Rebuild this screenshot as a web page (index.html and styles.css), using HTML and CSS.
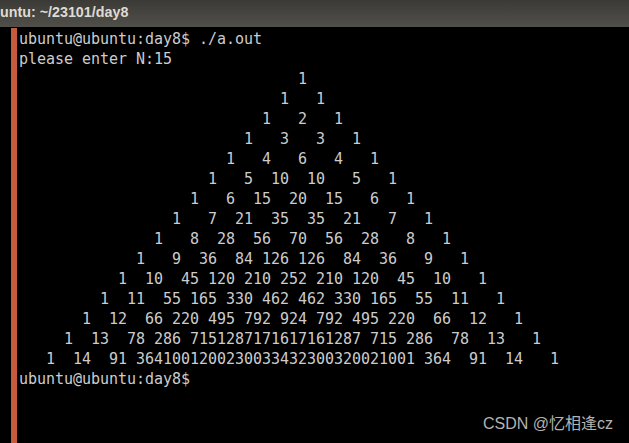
FILE: index.html
```html
<!DOCTYPE html>
<html>
<head>
<meta charset="utf-8">
<link rel="stylesheet" href="styles.css">
</head>
<body>
<div class="window">
  <div class="titlebar"><span class="title">untu: ~/23101/day8</span></div>
  <div class="term">
    <div class="gutter"></div>
    <div class="strip"></div>
<pre class="output">ubuntu@ubuntu:day8$ ./a.out
please enter N:15
                               1
                             1   1
                           1   2   1
                         1   3   3   1
                       1   4   6   4   1
                     1   5  10  10   5   1
                   1   6  15  20  15   6   1
                 1   7  21  35  35  21   7   1
               1   8  28  56  70  56  28   8   1
             1   9  36  84 126 126  84  36   9   1
           1  10  45 120 210 252 210 120  45  10   1
         1  11  55 165 330 462 462 330 165  55  11   1
       1  12  66 220 495 792 924 792 495 220  66  12   1
     1  13  78 286 7151287171617161287 715 286  78  13   1
   1  14  91 3641001200230033432300320021001 364  91  14   1
ubuntu@ubuntu:day8$</pre>
  </div>
  <div class="watermark">CSDN @忆相逢cz</div>
</div>
</body>
</html>
```
FILE: styles.css
```css
html, body {
  margin: 0;
  padding: 0;
  background: #000;
}
.window {
  position: relative;
  width: 629px;
  height: 443px;
  overflow: hidden;
  display: flex;
  flex-direction: column;
  background: #000;
}
.titlebar {
  height: 25px;
  padding-bottom: 2px;
  flex: none;
  background: linear-gradient(#3b3a36, #504f4a);
  display: flex;
  align-items: center;
  overflow: hidden;
}
.title {
  margin-left: 0;
  font-family: "Liberation Sans", Arial, sans-serif;
  font-weight: bold;
  font-size: 14.3px;
  line-height: 25px;
  color: #dfdbd2;
  white-space: nowrap;
}
.term {
  flex: 1;
  display: flex;
  align-items: stretch;
  padding-top: 1px;
}
.gutter {
  width: 11px;
  flex: none;
}
.strip {
  width: 6px;
  flex: none;
  background: #c65a3c;
}
.output {
  margin: 0;
  padding: 1px 0 0 2px;
  font-family: "DejaVu Sans Mono", monospace;
  font-size: 15px;
  line-height: 20px;
  letter-spacing: -0.03px;
  color: #cccccc;
}
.watermark {
  position: absolute;
  right: 16px;
  bottom: 10px;
  font-family: "Liberation Sans", "Noto Sans CJK SC", sans-serif;
  font-size: 16px;
  line-height: 18px;
  color: #b3b3b3;
  white-space: nowrap;
}
```
